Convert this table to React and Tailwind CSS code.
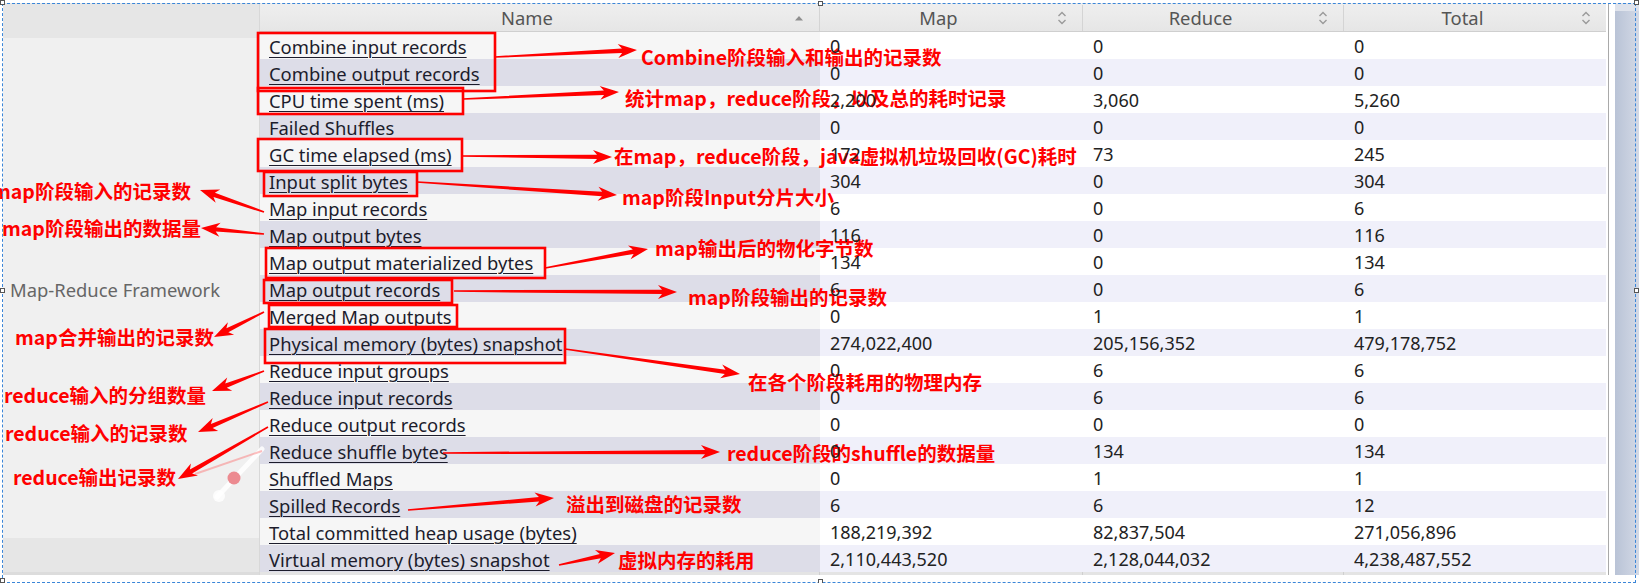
import React from "react";

const rows = [
  ["Combine input records", "0", "0", "0"],
  ["Combine output records", "0", "0", "0"],
  ["CPU time spent (ms)", "2,200", "3,060", "5,260"],
  ["Failed Shuffles", "0", "0", "0"],
  ["GC time elapsed (ms)", "172", "73", "245"],
  ["Input split bytes", "304", "0", "304"],
  ["Map input records", "6", "0", "6"],
  ["Map output bytes", "116", "0", "116"],
  ["Map output materialized bytes", "134", "0", "134"],
  ["Map output records", "6", "0", "6"],
  ["Merged Map outputs", "0", "1", "1"],
  ["Physical memory (bytes) snapshot", "274,022,400", "205,156,352", "479,178,752"],
  ["Reduce input groups", "0", "6", "6"],
  ["Reduce input records", "0", "6", "6"],
  ["Reduce output records", "0", "0", "0"],
  ["Reduce shuffle bytes", "0", "134", "134"],
  ["Shuffled Maps", "0", "1", "1"],
  ["Spilled Records", "6", "6", "12"],
  ["Total committed heap usage (bytes)", "188,219,392", "82,837,504", "271,056,896"],
  ["Virtual memory (bytes) snapshot", "2,110,443,520", "2,128,044,032", "4,238,487,552"],
];

const arrows = [
  [495, 57, 637, 50],
  [463, 99, 619, 92],
  [462, 156, 612, 157],
  [417, 182, 617, 195],
  [264, 212, 200, 190],
  [264, 234, 201, 228],
  [545, 268, 648, 249],
  [454, 291, 677, 292],
  [264, 312, 214, 337],
  [565, 349, 740, 374],
  [264, 371, 212, 391],
  [268, 402, 198, 432],
  [268, 427, 178, 479],
  [443, 453, 720, 452],
  [408, 510, 554, 498],
  [559, 565, 615, 553],
];

const boxes = [
  [258, 33, 495, 91],
  [258, 88, 463, 114],
  [258, 139, 462, 171],
  [264, 172, 417, 196],
  [266, 248, 545, 278],
  [264, 280, 452, 303],
  [269, 305, 457, 327],
  [265, 329, 565, 363],
];

const notes = [
  { t: "Combine阶段输入和输出的记录数", c: "left-[641px] top-[43px]" },
  { t: "统计map，reduce阶段，以及总的耗时记录", c: "left-[625px] top-[84px]" },
  { t: "在map，reduce阶段，java虚拟机垃圾回收(GC)耗时", c: "left-[614px] top-[142px]" },
  { t: "map阶段Input分片大小", c: "left-[622px] top-[183px]" },
  { t: "map阶段输入的记录数", c: "left-[-8px] top-[177px]" },
  { t: "map阶段输出的数据量", c: "left-[2px] top-[214px]" },
  { t: "map输出后的物化字节数", c: "left-[655px] top-[234px]" },
  { t: "map阶段输出的记录数", c: "left-[688px] top-[283px]" },
  { t: "map合并输出的记录数", c: "left-[15px] top-[323px]" },
  { t: "在各个阶段耗用的物理内存", c: "left-[748px] top-[368px]" },
  { t: "reduce输入的分组数量", c: "left-[4px] top-[381px]" },
  { t: "reduce输入的记录数", c: "left-[5px] top-[419px]" },
  { t: "reduce输出记录数", c: "left-[13px] top-[463px]" },
  { t: "reduce阶段的shuffle的数据量", c: "left-[727px] top-[439px]" },
  { t: "溢出到磁盘的记录数", c: "left-[566px] top-[490px]" },
  { t: "虚拟内存的耗用", c: "left-[618px] top-[546px]" },
];

function arrowPoints(x1, y1, x2, y2) {
  const dx = x2 - x1;
  const dy = y2 - y1;
  const len = Math.hypot(dx, dy);
  const ux = dx / len;
  const uy = dy / len;
  const nx = -uy;
  const ny = ux;
  const L = 19;
  const W = 7;
  const t0 = 0.8;
  const t1 = 2.2;
  const bx = x2 - ux * L;
  const by = y2 - uy * L;
  const nbx = x2 - ux * (L - 4);
  const nby = y2 - uy * (L - 4);
  const p = [
    [x1 + nx * t0, y1 + ny * t0],
    [nbx + nx * t1, nby + ny * t1],
    [bx + nx * W, by + ny * W],
    [x2, y2],
    [bx - nx * W, by - ny * W],
    [nbx - nx * t1, nby - ny * t1],
    [x1 - nx * t0, y1 - ny * t0],
  ];
  return p.map((q) => q[0].toFixed(1) + "," + q[1].toFixed(1)).join(" ");
}

function SortUp() {
  return (
    <svg width="10" height="6" viewBox="0 0 10 6" className="mr-[15px] shrink-0">
      <path d="M1 5.5 L5 1 L9 5.5 Z" fill="#8e8e8e" />
    </svg>
  );
}

function SortBoth() {
  return (
    <svg width="10" height="14" viewBox="0 0 10 14" className="mr-[15px] shrink-0">
      <path d="M1.5 5 L5 1.5 L8.5 5" fill="none" stroke="#9a9a9a" strokeWidth="1.4" />
      <path d="M1.5 9 L5 12.5 L8.5 9" fill="none" stroke="#9a9a9a" strokeWidth="1.4" />
    </svg>
  );
}

function Handle({ c }) {
  return <div className={"absolute w-[5px] h-[5px] bg-white border border-[#555] z-30 " + c} />;
}

export default function App() {
  return (
    <div className="relative w-[1639px] h-[583px] overflow-hidden bg-white font-['Noto_Sans',sans-serif] text-[18px]">
      <div className="flex pt-[3px] pl-[3px] h-[575px]">
        {/* left group panel */}
        <div className="w-[257px] flex flex-col border-r border-[#d8d8d8]">
          <div className="h-[35px] bg-[#e6e6e6]" />
          <div className="flex-1 bg-[#f0f0f0] flex items-center pl-[7px] pt-[3px] text-[#666666] text-[18.4px]">
            Map-Reduce Framework
          </div>
          <div className="h-[34px] bg-[#e6e6e6]" />
          <div className="h-[3px] bg-[#dcdcdc]" />
        </div>

        {/* table */}
        <div className="w-[1346px] flex flex-col">
          <div className="flex h-[29px] pt-[2px] bg-gradient-to-b from-[#efefef] to-[#e6e6e6] border-b border-[#cfcfcf] text-[#555555] text-[18.4px]">
            <div className="w-[560px] flex items-center border-r border-[#d4d4d4]">
              <span className="flex-1 text-center">Name</span>
              <SortUp />
            </div>
            <div className="w-[263px] flex items-center border-r border-[#d4d4d4]">
              <span className="flex-1 text-center">Map</span>
              <SortBoth />
            </div>
            <div className="w-[261px] flex items-center border-r border-[#d4d4d4]">
              <span className="flex-1 text-center">Reduce</span>
              <SortBoth />
            </div>
            <div className="w-[262px] flex items-center">
              <span className="flex-1 text-center">Total</span>
              <SortBoth />
            </div>
          </div>
          {rows.map((r, i) => {
            const odd = i % 2 === 0;
            return (
              <div key={r[0]} className="flex h-[27px] leading-[29px]">
                <div className={"w-[560px] pl-[9px] text-[18.4px] text-[#1c1c2c] whitespace-nowrap " + (odd ? "bg-[#f6f6f6]" : "bg-[#dddde8]")}>
                  <span className="underline underline-offset-[3px] decoration-1">{r[0]}</span>
                </div>
                {r.slice(1).map((v, j) => (
                  <div
                    key={j}
                    className={
                      (j === 0 ? "w-[263px] " : j === 1 ? "w-[261px] " : "w-[262px] ") +
                      "pl-[10px] text-[#222222] " +
                      (odd ? "bg-white" : "bg-[#f0f0fa]")
                    }
                  >
                    <span className="relative z-20">{v}</span>
                  </div>
                ))}
              </div>
            );
          })}
          <div className="flex h-[3px] bg-[#e4e4e4]">
            <div className="w-[560px] border-r border-[#cfcfcf]" />
            <div className="w-[263px] border-r border-[#cfcfcf]" />
            <div className="w-[261px] border-r border-[#cfcfcf]" />
          </div>
        </div>
        <div className="w-[2px] bg-white" />
        <div className="w-px bg-[#a9a9a9]" />
        <div className="w-[6px] bg-white" />
        <div className="flex-1 flex flex-col">
          <div className="h-[8px] bg-[#dfe3ec]" />
          <div className="flex-1 bg-gradient-to-r from-[#b9c3d6] to-[#d3d9e6]" />
        </div>
      </div>

      {/* selection frame */}
      <div className="absolute left-[2px] top-[3px] w-[1634px] h-[580px] border border-dashed border-[#3b86d8] z-30 pointer-events-none" />
      <Handle c="left-0 top-0" />
      <Handle c="left-[818px] top-[1px]" />
      <Handle c="left-[1634px] top-0" />
      <Handle c="left-0 top-[288px]" />
      <Handle c="left-[1634px] top-[288px]" />
      <Handle c="left-0 top-[578px]" />
      <Handle c="left-[818px] top-[579px]" />

      {/* annotation drawing */}
      <svg className="absolute left-0 top-0 z-10 pointer-events-none" width="1639" height="583" viewBox="0 0 1639 583">
        <line x1="217" y1="497" x2="262" y2="449" stroke="#ffffff" strokeOpacity="0.85" strokeWidth="5" strokeLinecap="round" />
        <circle cx="219" cy="496" r="6" fill="#ffffff" fillOpacity="0.8" />
        <line x1="262" y1="451" x2="195" y2="474" stroke="#ff4a4a" strokeOpacity="0.35" strokeWidth="2" />
        <circle cx="234" cy="478" r="6.5" fill="#ec8a90" />
        {boxes.map((b, i) => (
          <rect key={i} x={b[0]} y={b[1]} width={b[2] - b[0]} height={b[3] - b[1]} fill="none" stroke="#ff0000" strokeWidth="2.6" />
        ))}
        {arrows.map((a, i) => (
          <polygon key={i} points={arrowPoints(a[0], a[1], a[2], a[3])} fill="#ff0000" />
        ))}
      </svg>
      {notes.map((n) => (
        <div
          key={n.t}
          className={
            "absolute z-10 whitespace-nowrap leading-[28px] text-[19.5px] font-bold text-[#ff0000] font-['Noto_Sans_CJK_SC',sans-serif] " +
            n.c
          }
        >
          {n.t}
        </div>
      ))}
    </div>
  );
}
